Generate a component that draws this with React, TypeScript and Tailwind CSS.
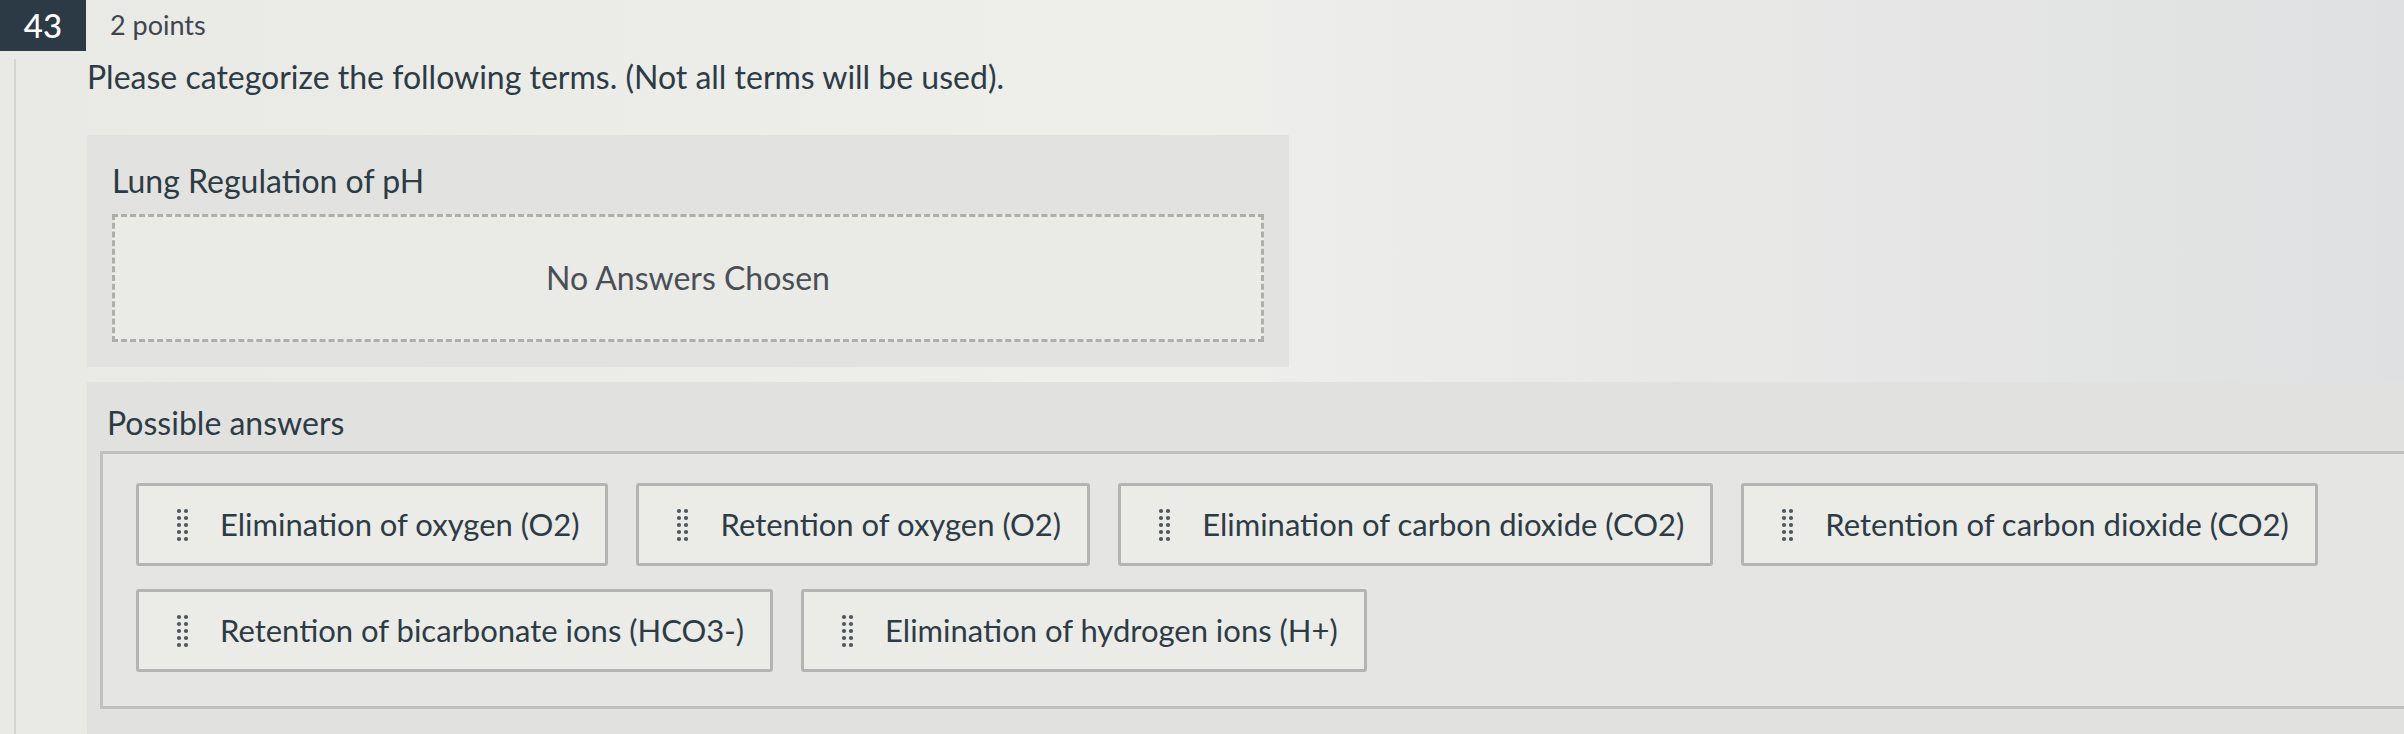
import React from 'react';

const answers = [
  'Elimination of oxygen (O2)',
  'Retention of oxygen (O2)',
  'Elimination of carbon dioxide (CO2)',
  'Retention of carbon dioxide (CO2)',
  'Retention of bicarbonate ions (HCO3-)',
  'Elimination of hydrogen ions (H+)',
];

const GripIcon = () => (
  <svg width="13" height="34" viewBox="0 0 13 34" className="shrink-0">
    {[0, 1, 2, 3, 4].map((r) =>
      [0, 1].map((c) => (
        <circle key={`${r}-${c}`} cx={3 + c * 7} cy={3 + r * 7} r="2.1" fill="#4f565d" />
      ))
    )}
  </svg>
);

const AnswerChip = ({ label }: { label: string }) => (
  <div className="flex h-[83px] items-center rounded-[3px] border-[3px] border-[#b3b4b3] bg-[#ebebe8] pl-[37px] pr-[26px]">
    <GripIcon />
    <span className="ml-[31px] whitespace-nowrap text-[31px] text-[#2d3b45]">{label}</span>
  </div>
);

export default function App() {
  return (
    <div
      className="relative h-[734px] w-[2404px] overflow-hidden bg-gradient-to-r from-[#e9e9e6] via-[#eeeeeb] to-[#dfe0e1]"
      style={{ fontFamily: 'Lato, "Open Sans", sans-serif' }}
    >
      {/* Question header */}
      <div className="flex h-[51px] items-center">
        <div className="flex h-[51px] w-[86px] items-center justify-center bg-[#2b3a44] text-[33px] font-medium text-white">
          43
        </div>
        <div className="ml-[24px] text-[27px] text-[#3d4650]">2 points</div>
      </div>

      <div className="ml-[14px] h-full border-l-2 border-[#d4d4d1] pl-[71px]">
        <p className="mt-[8px] text-[32px] leading-[36px] text-[#2d3b45]">
          Please categorize the following terms. (Not all terms will be used).
        </p>

        {/* Category */}
        <div className="mt-[40px] w-[1202px] bg-[#e2e3e0] px-[25px] pb-[25px] pt-[27px]">
          <div className="text-[32px] leading-[38px] text-[#2d3b45]">Lung Regulation of pH</div>
          <div className="mt-[14px] flex h-[128px] items-center justify-center border-[3px] border-dashed border-[#aeaeac] bg-[#eaeae7]">
            <span className="text-[32px] text-[#4a4f55]">No Answers Chosen</span>
          </div>
        </div>

        {/* Possible answers */}
        <div className="mt-[15px] h-[400px] bg-[#e1e2df] pl-[13px] pt-[22px]">
          <div className="pl-[7px] text-[32px] leading-[38px] text-[#2d3b45]">Possible answers</div>
          <div className="mt-[9px] border-y-[3px] border-l-[3px] border-[#c0c1bf] bg-[#e5e6e3] pb-[34px] pl-[33px] pt-[29px]">
            <div className="flex flex-wrap gap-x-[28px] gap-y-[23px]">
              {answers.map((a) => (
                <AnswerChip key={a} label={a} />
              ))}
            </div>
          </div>
        </div>
      </div>
    </div>
  );
}
